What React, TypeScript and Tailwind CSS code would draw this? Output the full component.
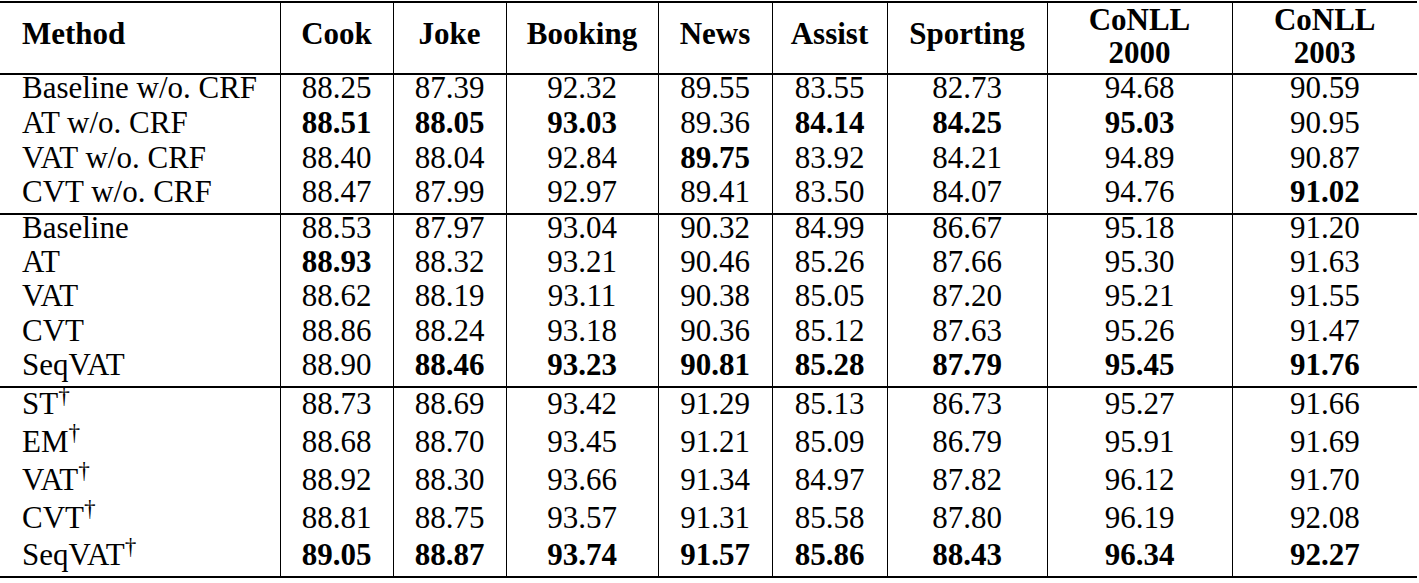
import React from 'react';

type Cell = [string, boolean];
type Row = { name: string; dagger?: boolean; cells: Cell[] };

const b = (v: string): Cell => [v, true];
const n = (v: string): Cell => [v, false];

const groups: { h: string; rows: Row[] }[] = [
  {
    h: 'h-[35px] pb-[8px]',
    rows: [
      { name: 'Baseline w/o. CRF', cells: [n('88.25'), n('87.39'), n('92.32'), n('89.55'), n('83.55'), n('82.73'), n('94.68'), n('90.59')] },
      { name: 'AT w/o. CRF', cells: [b('88.51'), b('88.05'), b('93.03'), n('89.36'), b('84.14'), b('84.25'), b('95.03'), n('90.95')] },
      { name: 'VAT w/o. CRF', cells: [n('88.40'), n('88.04'), n('92.84'), b('89.75'), n('83.92'), n('84.21'), n('94.89'), n('90.87')] },
      { name: 'CVT w/o. CRF', cells: [n('88.47'), n('87.99'), n('92.97'), n('89.41'), n('83.50'), n('84.07'), n('94.76'), b('91.02')] },
    ],
  },
  {
    h: 'h-[34.6px] pb-[8px]',
    rows: [
      { name: 'Baseline', cells: [n('88.53'), n('87.97'), n('93.04'), n('90.32'), n('84.99'), n('86.67'), n('95.18'), n('91.20')] },
      { name: 'AT', cells: [b('88.93'), n('88.32'), n('93.21'), n('90.46'), n('85.26'), n('87.66'), n('95.30'), n('91.63')] },
      { name: 'VAT', cells: [n('88.62'), n('88.19'), n('93.11'), n('90.38'), n('85.05'), n('87.20'), n('95.21'), n('91.55')] },
      { name: 'CVT', cells: [n('88.86'), n('88.24'), n('93.18'), n('90.36'), n('85.12'), n('87.63'), n('95.26'), n('91.47')] },
      { name: 'SeqVAT', cells: [n('88.90'), b('88.46'), b('93.23'), b('90.81'), b('85.28'), b('87.79'), b('95.45'), b('91.76')] },
    ],
  },
  {
    h: 'h-[38px] pb-[4px]',
    rows: [
      { name: 'ST', dagger: true, cells: [n('88.73'), n('88.69'), n('93.42'), n('91.29'), n('85.13'), n('86.73'), n('95.27'), n('91.66')] },
      { name: 'EM', dagger: true, cells: [n('88.68'), n('88.70'), n('93.45'), n('91.21'), n('85.09'), n('86.79'), n('95.91'), n('91.69')] },
      { name: 'VAT', dagger: true, cells: [n('88.92'), n('88.30'), n('93.66'), n('91.34'), n('84.97'), n('87.82'), n('96.12'), n('91.70')] },
      { name: 'CVT', dagger: true, cells: [n('88.81'), n('88.75'), n('93.57'), n('91.31'), n('85.58'), n('87.80'), n('96.19'), n('92.08')] },
      { name: 'SeqVAT', dagger: true, cells: [b('89.05'), b('88.87'), b('93.74'), b('91.57'), b('85.86'), b('88.43'), b('96.34'), b('92.27')] },
    ],
  },
];

const widths = [280, 113, 113, 152, 114, 115, 160, 185, 185];

export default function App() {
  return (
    <div className="w-[1419px] h-[583px] bg-white pt-px font-['Liberation_Serif',serif] text-black text-[31px]">
      <table className="table-fixed border-collapse w-[1417px]">
        <colgroup>
          {widths.map((w, i) => (
            <col key={i} style={{ width: w }} />
          ))}
        </colgroup>
        <thead>
          <tr className="h-[70px] border-t-2 border-b-2 border-black">
            <th className="h-[70px] text-left font-bold pl-[22px] pb-[9px] leading-[33px]">Method</th>
            {['Cook', 'Joke', 'Booking', 'News', 'Assist', 'Sporting'].map((h) => (
              <th key={h} className="h-[70px] border-l border-black font-bold text-center pb-[9px] leading-[33px]">
                {h}
              </th>
            ))}
            <th className="h-[70px] border-l border-black font-bold text-center pb-[4px] leading-[33px]">
              CoNLL
              <br />
              2000
            </th>
            <th className="h-[70px] border-l border-black font-bold text-center pb-[4px] leading-[33px]">
              CoNLL
              <br />
              2003
            </th>
          </tr>
        </thead>
        {groups.map((g, gi) => (
          <tbody key={gi} className={gi === 2 ? 'border-b-2 border-black' : ''}>
            {g.rows.map((r, ri) => (
              <tr key={ri} className={ri === 0 && gi > 0 ? 'border-t-2 border-black' : ''}>
                <td className={`${g.h} pl-[22px] leading-[24px] whitespace-nowrap`}>
                  {r.name}
                  {r.dagger && <sup>†</sup>}
                </td>
                {r.cells.map(([v, bold], ci) => (
                  <td
                    key={ci}
                    className={`${g.h} border-l border-black text-center leading-[24px] ${bold ? 'font-bold' : ''}`}
                  >
                    {v}
                  </td>
                ))}
              </tr>
            ))}
          </tbody>
        ))}
      </table>
    </div>
  );
}
